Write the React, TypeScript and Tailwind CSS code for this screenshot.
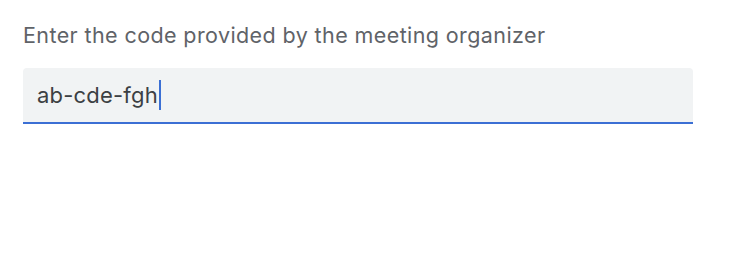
export default function App() {
  return (
    <div className="min-h-screen bg-white" style={{ fontFamily: 'Inter, "Liberation Sans", sans-serif' }}>
      <div className="w-[693px] pl-[23px] pt-[22px]">
        <p className="text-[21.5px] leading-[26px] tracking-[0.4px] text-[#5f6368]">Enter the code provided by the meeting organizer</p>
        <div className="mt-[20px] h-[56px] rounded-t-[4px] bg-[#f1f3f4] border-b-2 border-[#3b6fd4] flex items-center pl-[14px]">
          <span className="text-[22px] tracking-[0.2px] text-[#3c4043]">ab-cde-fgh</span>
          <span className="ml-px h-[30px] w-[2px] bg-[#3b6fd4]" />
        </div>
      </div>
    </div>
  )
}
